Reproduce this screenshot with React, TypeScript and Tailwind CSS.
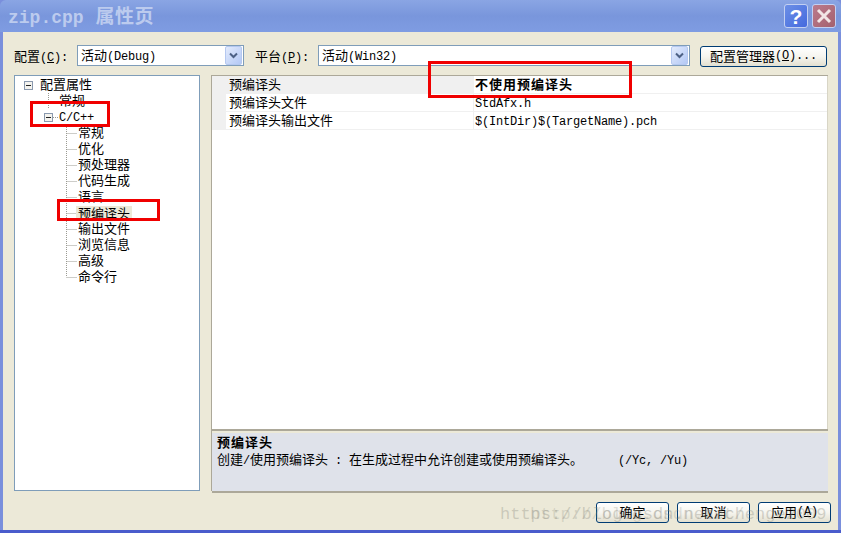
import type { ReactNode } from "react";

const mono = "font-['Liberation_Mono'] text-[12px] tracking-[-0.2px]";

function L({ children }: { children: ReactNode }) {
  return <span className={`${mono} whitespace-pre`}>{children}</span>;
}

function Hot({ children }: { children: ReactNode }) {
  return <span className={`${mono} underline underline-offset-1`}>{children}</span>;
}

function DropArrow() {
  return (
    <div className="w-[17px] h-[19px] my-auto mr-px flex items-center justify-center rounded-[2px] border border-[#b5c8f0] bg-gradient-to-br from-[#e3ebfc] to-[#b3c8f5]">
      <svg width="9" height="7" viewBox="0 0 9 7">
        <path d="M1 1.5 L4.5 5 L8 1.5" fill="none" stroke="#4d6185" strokeWidth="2" />
      </svg>
    </div>
  );
}

function Combo({ width, children }: { width: string; children: ReactNode }) {
  return (
    <div className={`${width} h-[21px] bg-white border border-[#7f9db9] flex justify-between items-center pl-[3px]`}>
      <span className="leading-none">{children}</span>
      <DropArrow />
    </div>
  );
}

function XpButton({ width, children }: { width: string; children: ReactNode }) {
  return (
    <div className={`${width} h-[21px] rounded-[3px] border border-[#003c74] bg-gradient-to-b from-white via-[#f6f5ef] to-[#e3e0d0] flex items-center justify-center leading-none pb-[2px]`}>
      {children}
    </div>
  );
}

function Expander() {
  return (
    <svg width="9" height="9" viewBox="0 0 9 9" className="shrink-0">
      <rect x="0.5" y="0.5" width="8" height="8" fill="#f4f3ee" stroke="#8a99ae" />
      <path d="M2 4.5 H7" stroke="#222" />
    </svg>
  );
}

// one dotted connector cell of the tree, 16px high
function Guide({ last }: { last?: boolean }) {
  return (
    <svg width="12" height="16" viewBox="0 0 12 16" className="shrink-0">
      <path d={last ? "M0.5 0 V8 M0.5 8.5 H11" : "M0.5 0 V16 M0.5 8.5 H11"} stroke="#9a9a92" strokeDasharray="1 1" fill="none" />
    </svg>
  );
}

const children = ["常规", "优化", "预处理器", "代码生成", "语言", "预编译头", "输出文件", "浏览信息", "高级", "命令行"];

function Tree() {
  return (
    <div className="relative w-[186px] h-full bg-white border border-[#7f9db9] pt-[1px] text-[13px] leading-4 text-black">
      <div className="flex items-center h-4 pl-[9px]">
        <Expander />
        <span className="ml-[7px] pb-[2px]">配置属性</span>
      </div>
      <div className="flex items-center h-4 pl-[33px]">
        <Guide />
        <span className="-ml-px pb-[2px]">常规</span>
      </div>
      <div className="flex items-center h-4 pl-[29px]">
        <Expander />
        <svg width="6" height="16" viewBox="0 0 6 16" className="shrink-0">
          <path d="M0 8.5 H6" stroke="#9a9a92" strokeDasharray="1 1" />
        </svg>
        <span className="text-[12px] pb-[1px]"><L>C/C++</L></span>
      </div>
      {children.map((c, i) => (
        <div key={i} className="flex items-center h-4 pl-[51px]">
          <Guide last={i === children.length - 1} />
          {c === "预编译头" ? (
            <span className="bg-[#ece9d8] px-[2px] -ml-[2px] h-[15px] leading-[13px] pb-[2px]">{c}</span>
          ) : (
            <span className="pb-[2px]">{c}</span>
          )}
        </div>
      ))}
    </div>
  );
}

const rows = [
  { name: "预编译头", value: "不使用预编译头", bold: true },
  { name: "预编译头文件", value: "StdAfx.h" },
  { name: "预编译头输出文件", value: "$(IntDir)$(TargetName).pch" },
];

function Grid() {
  return (
    <div className="flex-1 min-w-0 h-full flex flex-col border-t border-l border-[#aca899] text-[13px]">
      <div className="flex-1 bg-white border-r border-[#d8d5c6]">
        {rows.map((r, i) => (
          <div key={i} className="flex h-[18px] border-b border-[#f0f0f0] pl-[14px] bg-[#f0f0f0]">
            <div className={`w-[247px] pl-[3px] leading-[15px] ${i === 0 ? "" : "bg-white"}`}>{r.name}</div>
            <div className={`flex-1 bg-white ml-[1px] pl-[1px] leading-[15px] ${r.bold ? "font-bold tracking-[1px]" : ""}`}>
              {r.bold ? r.value : <L>{r.value}</L>}
            </div>
          </div>
        ))}
      </div>
      <div className="h-[62px] border-t-2 border-[#aca899] bg-[#ece9d8] pt-[2px]">
        <div className="h-[60px] bg-[#dfe2ea] border-b-2 border-[#aca899] px-[5px] leading-[15px] pt-[1px]">
          <div className="font-bold tracking-[1px] mb-[2px]">预编译头</div>
          <div className="whitespace-pre">创建<L>/</L>使用预编译头<L> : </L>在生成过程中允许创建或使用预编译头。<L>     (/Yc, /Yu)</L></div>
        </div>
      </div>
    </div>
  );
}

function RedBox({ className }: { className: string }) {
  return <div className={`absolute border-[3px] border-[#f00000] ${className}`} />;
}

export default function App() {
  return (
    <div className="relative w-[841px] h-[533px] overflow-hidden flex flex-col bg-[#7a8fdc] font-['Noto_Sans_CJK_SC',sans-serif] text-[13px] text-black">
      <div className="h-[32px] shrink-0 rounded-t-[6px] bg-gradient-to-b from-[#8aa5e4] via-[#7996dc] to-[#7f9ce2] flex items-center pl-[8px] pr-[5px] text-[#bccbee]">
        <span className="flex-1 font-bold text-[19px] tracking-[0.5px] leading-none whitespace-pre">
          <span className="font-['Liberation_Mono'] text-[18px] tracking-[0] mr-[7px]">zip.cpp</span> 属性页
        </span>
        <div className="flex gap-[4px]">
          <div className="w-[24px] h-[24px] rounded-[3px] border border-[#c3d0f2] bg-gradient-to-br from-[#6c8fe6] to-[#4569de] flex items-center justify-center text-white font-bold text-[21px] leading-none font-['Liberation_Sans']">?</div>
          <div className="w-[24px] h-[24px] rounded-[3px] border border-[#c3d0f2] bg-gradient-to-br from-[#bb7a8c] to-[#a4616f] flex items-center justify-center">
            <svg width="16" height="16" viewBox="0 0 16 16">
              <path d="M2 2 L14 14 M14 2 L2 14" stroke="#f3e6e6" strokeWidth="3" />
            </svg>
          </div>
        </div>
      </div>
      <div className="flex-1 min-h-0 mx-[3px] bg-[#ece9d8] pl-[11px] pr-[7px] pt-[13px] flex flex-col">
        <div className="flex items-start h-[21px] shrink-0">
          <span className="w-[63px] mt-[4px] whitespace-nowrap leading-none">配置<L>(<Hot>C</Hot>):</L></span>
          <Combo width="w-[167px]">活动<L>(Debug)</L></Combo>
          <span className="w-[63px] mt-[4px] ml-[11px] whitespace-nowrap leading-none">平台<L>(<Hot>P</Hot>):</L></span>
          <Combo width="w-[372px]">活动<L>(Win32)</L></Combo>
          <div className="ml-[10px] mt-[1px]">
            <XpButton width="w-[127px]">配置管理器<L>(<Hot>O</Hot>)...</L></XpButton>
          </div>
        </div>
        <div className="flex h-[416px] shrink-0 mt-[9px] gap-[11px] pr-[3px]">
          <Tree />
          <Grid />
        </div>
        <div className="flex justify-end gap-[8px] mt-[11px]">
          <XpButton width="w-[73px]">确定</XpButton>
          <XpButton width="w-[73px]">取消</XpButton>
          <XpButton width="w-[73px]">应用<L>(<Hot>A</Hot>)</L></XpButton>
        </div>
      </div>
      <div className="h-[3px] shrink-0 bg-[#4a5ccc]" />

      <RedBox className="left-[30px] top-[101px] w-[80px] h-[26px]" />
      <RedBox className="left-[57px] top-[199px] w-[103px] h-[22px]" />
      <RedBox className="left-[428px] top-[61px] w-[204px] h-[37px]" />

      <div className="absolute left-[500px] top-[502px] font-['Liberation_Mono'] text-[17px] text-[#8a8a80]/35 whitespace-pre pointer-events-none">https://blog.csdn.net/chenge2009</div>
      <div className="absolute left-[530px] top-[502px] font-['Liberation_Mono'] text-[17px] text-[#8a8a80]/25 whitespace-pre pointer-events-none">http://blog.csdn.net/</div>
    </div>
  );
}
